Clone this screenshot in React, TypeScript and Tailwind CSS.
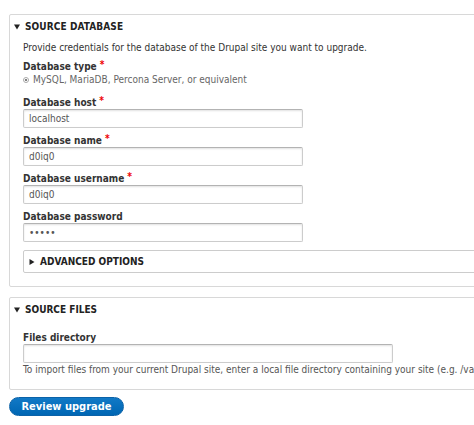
const font = "font-['DejaVu_Sans_Condensed','DejaVu_Sans',sans-serif]"

function Caret({ open }: { open: boolean }) {
  return (
    <svg width="6" height="6" viewBox="0 0 6 6" className="shrink-0">
      {open ? <path d="M0 0.5 L6 0.5 L3 5.5 Z" fill="#222" /> : <path d="M0.5 0 L5.5 3 L0.5 6 Z" fill="#222" />}
    </svg>
  )
}

function Label({ text, required }: { text: string; required?: boolean }) {
  return (
    <div className="h-[14px] leading-[16px] text-[10px] font-bold text-[#333]">
      {text}
      {required && <span className="ml-[3px] text-[#e00] relative -top-[2px]">*</span>}
    </div>
  )
}

function Input({ value, width = "w-[280px]" }: { value?: string; width?: string }) {
  return (
    <div
      className={`${width} h-[19px] rounded-[2px] border border-[#ccc] border-t-[#b3b3b3] bg-white shadow-[inset_0_1px_2px_rgba(0,0,0,0.12)] px-[5px] text-[10px] leading-[17px] text-[#555]`}
    >
      {value}
    </div>
  )
}

const fields = [
  { label: "Database host", value: "localhost", required: true },
  { label: "Database name", value: "d0iq0", required: true },
  { label: "Database username", value: "d0iq0", required: true },
  { label: "Database password", value: "•••••", required: false },
]

export default function App() {
  return (
    <div className={`w-[474px] h-[425px] overflow-hidden bg-white ${font} text-[#333]`}>
      <div className="pl-[9px] pt-[14px] w-[520px]">
        {/* Source database */}
        <div className="border border-[#d8d8d8] rounded-[2px] pb-[13px]">
          <div className="flex items-center gap-[5px] pl-[4px] pt-[4px] h-[19px] text-[10px] uppercase text-[#222]">
            <Caret open />
            <span className="font-bold tracking-[0.1px]">Source Database</span>
          </div>
          <div className="pl-[13px]">
            <p className="mt-[7px] h-[14px] leading-[14px] text-[10px] text-[#333]">
              Provide credentials for the database of the Drupal site you want to upgrade.
            </p>
            <div className="mt-[4px]">
              <Label text="Database type" required />
              <div className="flex items-center gap-[4px] h-[13px] text-[10px] text-[#666]">
                <span className="w-[6px] h-[6px] rounded-full border border-[#aaa] flex items-center justify-center">
                  <span className="w-[2px] h-[2px] rounded-full bg-[#555]" />
                </span>
                MySQL, MariaDB, Percona Server, or equivalent
              </div>
            </div>
            <div className="mt-[9px] flex flex-col gap-[5px]">
              {fields.map((f) => (
                <div key={f.label}>
                  <Label text={f.label} required={f.required} />
                  <Input value={f.value} />
                </div>
              ))}
            </div>
            <div className="mt-[8px] h-[23px] border border-[#ccc] rounded-[2px] flex items-center gap-[5px] pl-[5px] text-[10px] uppercase text-[#222]">
              <Caret open={false} />
              <span className="font-bold">Advanced Options</span>
            </div>
          </div>
        </div>

        {/* Source files */}
        <div className="mt-[10px] border border-[#d8d8d8] rounded-[2px] pb-[13px]">
          <div className="flex items-center gap-[5px] pl-[4px] pt-[4px] h-[19px] text-[10px] uppercase text-[#222]">
            <Caret open />
            <span className="font-bold">Source Files</span>
          </div>
          <div className="pl-[13px] mt-[13px]">
            <Label text="Files directory" />
            <Input width="w-[370px]" />
            <p className="h-[13px] leading-[13px] text-[10px] text-[#555] whitespace-nowrap">
              To import files from your current Drupal site, enter a local file directory containing your site (e.g. /var/www/docroot).
            </p>
          </div>
        </div>

        <button className="block mt-[7px] w-[115px] h-[19px] rounded-full bg-gradient-to-b from-[#1179c6] to-[#0066b3] border border-[#0b62a8] text-white text-[11px] font-bold leading-none">
          Review upgrade
        </button>
      </div>
    </div>
  )
}
